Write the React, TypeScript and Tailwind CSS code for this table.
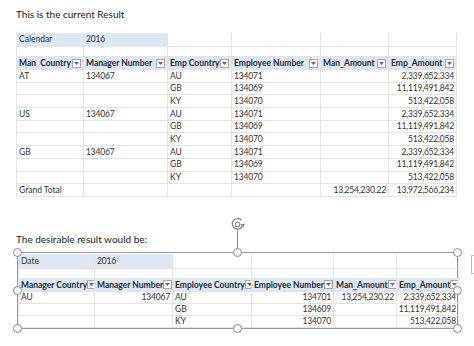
import React from 'react';

type Align = 'l' | 'r';

const font = { fontFamily: 'Lato, "Liberation Sans", sans-serif' };

function Drop() {
  return (
    <span className="ml-auto flex h-[9px] w-[9px] shrink-0 items-center justify-center border border-[#a6a6a6] bg-white">
      <svg width="5" height="3" viewBox="0 0 5 3">
        <path d="M0 0 L5 0 L2.5 3 Z" fill="#6b6b6b" />
      </svg>
    </span>
  );
}

function Cell({ w, h, children, align = 'l', bg = '', bold = false }: { w: number; h: string; children?: React.ReactNode; align?: Align; bg?: string; bold?: boolean }) {
  const numeric = typeof children === 'string' && /^[\d,.]+$/.test(children);
  return (
    <div
      style={{ width: w }}
      className={`flex ${h} shrink-0 items-center overflow-hidden whitespace-pre border-r border-b border-[#e4e4e4] px-[2px] ${align === 'r' ? 'justify-end' : ''} ${bg} ${bold ? 'font-bold text-[#1f2a3a]' : 'text-[#333]'} ${numeric ? 'tracking-[-0.2px]' : ''}`}
    >
      {children}
    </div>
  );
}

function PivotTable({ cols, filterLabel, filterValue, headers, rows, aligns, rowH, topH }: {
  cols: number[]; filterLabel: string; filterValue: string; headers: string[]; rows: string[][]; aligns: Align[]; rowH: string; topH: string;
}) {
  return (
    <div className="flex flex-col border-l border-[#e4e4e4] text-[8.5px] leading-none">
      <div className="flex">
        <Cell w={cols[0]} h={topH} bg="bg-[#dde8f3]">{filterLabel}</Cell>
        <Cell w={cols[1]} h={topH} bg="bg-[#dde8f3]">{filterValue}</Cell>
        {cols.slice(2).map((w, i) => <Cell key={i} w={w} h={topH} />)}
      </div>
      <div className="flex">
        {cols.map((w, i) => <Cell key={i} w={w} h="h-[10px]" />)}
      </div>
      <div className="flex">
        {headers.map((t, i) => (
          <Cell key={i} w={cols[i]} h="h-[13px]" bg="bg-[#dde8f3]" bold>
            <span>{t}</span>
            <Drop />
          </Cell>
        ))}
      </div>
      {rows.map((r, ri) => (
        <div key={ri} className="flex">
          {r.map((t, i) => <Cell key={i} w={cols[i]} h={rowH} align={aligns[i]}>{t}</Cell>)}
        </div>
      ))}
    </div>
  );
}

function Handle({ cls }: { cls: string }) {
  return <div className={`absolute h-[9px] w-[9px] rounded-full border border-[#8a8a8a] bg-white ${cls}`} />;
}

export default function App() {
  const rows1 = [
    ['AT', '134067', 'AU', '134071', '', '2,339,652,334'],
    ['', '', 'GB', '134069', '', '11,119,491,842'],
    ['', '', 'KY', '134070', '', '513,422,058'],
    ['US', '134067', 'AU', '134071', '', '2,339,652,334'],
    ['', '', 'GB', '134069', '', '11,119,491,842'],
    ['', '', 'KY', '134070', '', '513,422,058'],
    ['GB', '134067', 'AU', '134071', '', '2,339,652,334'],
    ['', '', 'GB', '134069', '', '11,119,491,842'],
    ['', '', 'KY', '134070', '', '513,422,058'],
    ['Grand Total', '', '', '', '13,254,230.22', '13,972,566,234'],
  ];
  const rows2 = [
    ['AU', '134067', 'AU', '134701', '13,254,230.22', '2,339,652,334'],
    ['', '', 'GB', '134609', '', '11,119,491,842'],
    ['', '', 'KY', '134070', '', '513,422,058'],
  ];

  return (
    <div style={font} className="relative h-[346px] w-[474px] overflow-hidden bg-white">
      <div className="pl-[16px] pt-[8px] text-[10px] leading-[12px] text-[#222]">This is the current Result</div>
      <div className="ml-[16px] mt-[13px]">
        <PivotTable
          cols={[67, 84, 64, 89, 68, 68]}
          filterLabel="Calendar"
          filterValue="2016"
          headers={['Man  Country', 'Manager Number', 'Emp Country', 'Employee Number', 'Man_Amount', 'Emp_Amount']}
          rows={rows1}
          aligns={['l', 'l', 'l', 'l', 'r', 'r']}
          rowH="h-[12.7px]"
          topH="h-[14px]"
        />
      </div>

      <div className="pl-[16px] pt-[36px] text-[10px] leading-[12px] text-[#222]">The desirable result would be:</div>

      <div className="relative ml-[17px] mt-[7px] w-[441px] border border-[#9a9a9a] pt-[1px]">
        <PivotTable
          cols={[76, 78, 79, 82, 63, 62]}
          filterLabel="Date"
          filterValue="2016"
          headers={['Manager Country', 'Manager Number', 'Employee Country', 'Employee Number', 'Man_Amount', 'Emp_Amount']}
          rows={rows2}
          aligns={['l', 'r', 'l', 'r', 'r', 'r']}
          rowH="h-[12px]"
          topH="h-[15px]"
        />
        <Handle cls="-left-[5px] -top-[5px]" />
        <Handle cls="left-[215px] -top-[5px]" />
        <Handle cls="-right-[5px] -top-[5px]" />
        <Handle cls="-left-[5px] top-[33px]" />
        <Handle cls="-right-[5px] top-[33px]" />
        <Handle cls="-left-[5px] -bottom-[5px]" />
        <Handle cls="left-[215px] -bottom-[5px]" />
        <Handle cls="-right-[5px] -bottom-[5px]" />
        <div className="absolute left-[219px] -top-[22px] h-[18px] w-px bg-[#8a8a8a]" />
        <svg className="absolute left-[212px] -top-[36px]" width="16" height="15" viewBox="0 0 16 15">
          <path d="M11.5 3.2 A5.3 5.3 0 1 0 12.8 8" fill="none" stroke="#8a8a8a" strokeWidth="1.3" />
          <circle cx="7.5" cy="7.5" r="2.3" fill="none" stroke="#8a8a8a" strokeWidth="1.1" />
          <path d="M10.2 7.2 L15 6.4 L13.2 10.6 Z" fill="#8a8a8a" />
        </svg>
      </div>
      <div className="absolute left-[471px] top-[255px] h-[19px] w-[10px] border border-[#bdbdbd]" />
    </div>
  );
}
